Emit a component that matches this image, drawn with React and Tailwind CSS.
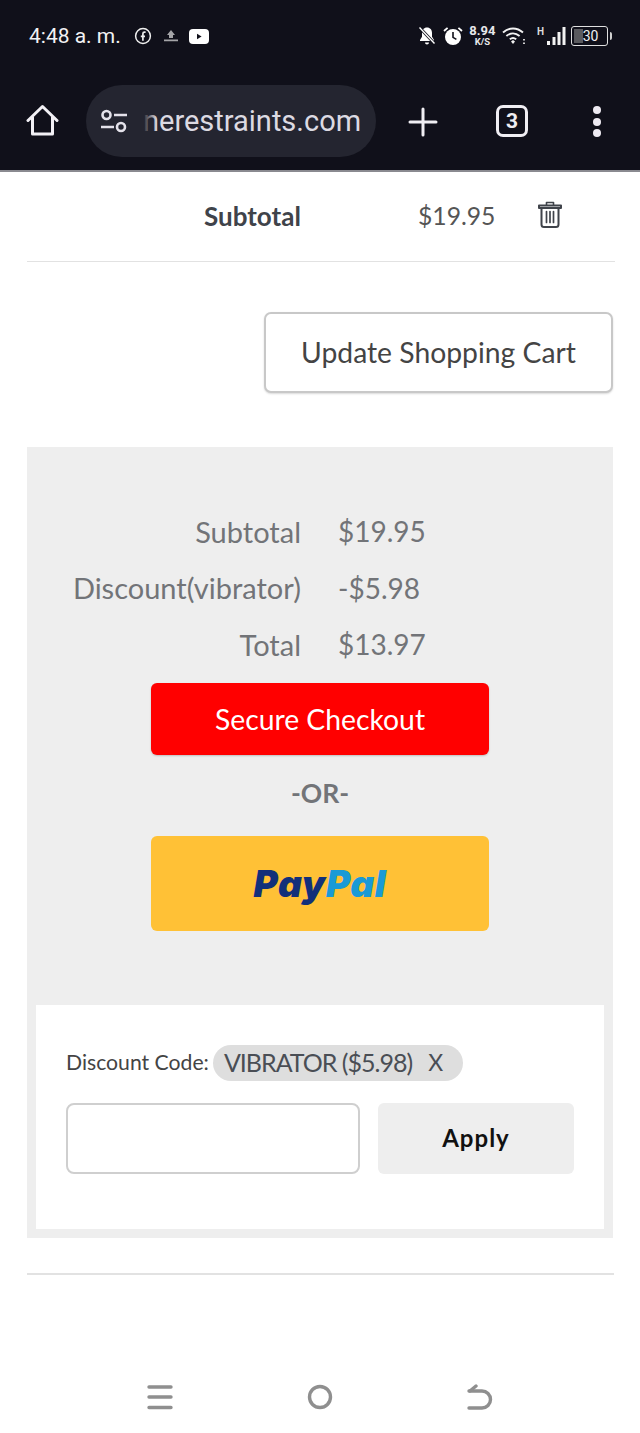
function StatusBar() {
  return (
    <div className="flex h-[71px] items-center pl-[29px] pr-[28px] pt-[1px] font-['Roboto',sans-serif] text-white">
      <span className="text-[21px] leading-none text-[#f2f2f4]">4:48 a. m.</span>
      <svg className="ml-[13px]" width="18" height="18" viewBox="0 0 18 18" fill="none" stroke="#eee" strokeWidth="1.5">
        <circle cx="9" cy="9" r="7.4" />
        <path d="M11.6 5.2h-1.2c-1 0-1.5.6-1.5 1.6v7M6.8 9.4h4.2" strokeWidth="1.7" />
      </svg>
      <svg className="ml-[11px]" width="16" height="14" viewBox="0 0 16 14" fill="#a5a5a8">
        <path d="M8 1l4 5H10v3H6V6H4zM1 10.600h14v1.600H1z" />
      </svg>
      <svg className="ml-[10px]" width="20" height="15" viewBox="0 0 20 15">
        <rect width="20" height="15" rx="4" fill="#fff" />
        <path d="M8 4.800l4.600 2.700L8 10.200z" fill="#10101a" />
      </svg>
      <svg className="ml-auto" width="18" height="20" viewBox="0 0 18 20" fill="#fff">
        <path d="M9 1.500c-3.200 0-5 2.400-5 5.200v4L2 14v1h14v-1l-2-3.300v-4c0-2.800-1.800-5.200-5-5.200zM7 16.400h4c0 1.200-.9 2-2 2s-2-.8-2-2z" />
        <path d="M1.500 1.500l15 16" stroke="#10101a" strokeWidth="3" />
        <path d="M1.500 1.500l15 16" stroke="#fff" strokeWidth="1.300" />
      </svg>
      <svg className="ml-[7px]" width="20" height="20" viewBox="0 0 20 20">
        <circle cx="10" cy="11" r="8" fill="#fff" />
        <path d="M10 6v5.400l3.400 2" fill="none" stroke="#10101a" strokeWidth="1.600" />
        <path d="M1 5l3.600-3.200M19 5l-3.600-3.200" stroke="#fff" strokeWidth="1.800" />
      </svg>
      <div className="ml-[7px] flex w-[25px] flex-col items-center font-bold leading-none text-[#e8e8ea]">
        <span className="text-[13px] leading-[12px]">8.94</span>
        <span className="text-[9.500px] leading-[10px]">K/S</span>
      </div>
      <svg className="ml-[7px]" width="24" height="20" viewBox="0 0 24 20" fill="none" stroke="#f2f2f2" strokeWidth="1.900">
        <path d="M1 6.500c6-5.400 14-5.400 20 0M4.400 10c4-3.400 9.200-3.400 13.200 0M7.800 13.300c2-1.600 4.400-1.600 6.400 0" />
        <path d="M9 15.500l2-1.600 2 1.600-2 2.400z" fill="#f2f2f2" stroke="none" />
        <path d="M22 13v1.600M22 16.400V18" strokeWidth="1.700" />
      </svg>
      <span className="ml-[11px] mb-[9px] text-[10px] font-bold leading-none text-[#ddd]">H</span>
      <svg className="ml-[2px]" width="20" height="20" viewBox="0 0 20 20" fill="#f2f2f2">
        <rect x="1" y="15" width="3" height="4" />
        <rect x="6.500" y="11" width="3" height="8" />
        <rect x="11.500" y="6" width="3" height="13" />
        <rect x="16.500" y="1" width="3" height="18" />
      </svg>
      <div className="relative ml-[5px] flex h-[20px] w-[37px] items-center justify-center overflow-hidden rounded-[3px] border border-[#e0e0e0] text-[14px] leading-none text-[#f0f0f0]">
        <div className="absolute inset-y-[2px] left-[2px] w-[9px] bg-[#5a5a5e]" />
        <span className="relative pl-[2px]">30</span>
      </div>
      <div className="ml-[2px] h-[8px] w-[2px] rounded-r-sm bg-[#d0d0d0]" />
    </div>
  );
}

function Toolbar() {
  return (
    <div className="flex h-[100px] items-start pl-[26px] pt-[14px]">
      <svg className="mt-[19px]" width="33" height="33" viewBox="0 0 33 33" fill="none" stroke="#f2f0f5" strokeWidth="3" strokeLinejoin="round" strokeLinecap="round">
        <path d="M2 16.500L16.500 2.500 31 16.500M6.500 13v17h20V13" />
      </svg>
      <div className="ml-[27px] flex h-[72px] w-[290px] items-center rounded-full bg-[#242530] pl-[14px]">
        <svg width="28" height="24" viewBox="0 0 28 24" fill="none" stroke="#e4e2ea" strokeWidth="2.600">
          <circle cx="6.500" cy="6" r="4" />
          <circle cx="21" cy="18" r="4" />
          <path d="M14 6h13M1 18h13" />
        </svg>
        {/* the first letter fades out, like chrome does with a long url */}
        <div className="relative ml-[15px] whitespace-nowrap font-['Roboto',sans-serif] text-[29px] leading-[36px] text-[#dcdae2]">
          nerestraints.com
          <div className="absolute inset-y-0 left-0 w-[14px] bg-gradient-to-r from-[#242530] to-transparent" />
        </div>
      </div>
      <svg className="ml-[32px] mt-[22px]" width="30" height="30" viewBox="0 0 30 30" stroke="#f0eef3" strokeWidth="3" strokeLinecap="round">
        <path d="M15 2v26M2 15h26" />
      </svg>
      <div className="ml-[58px] mt-[20px] flex h-[32px] w-[32px] items-center justify-center rounded-[7px] border-[3px] border-[#f0eef3] font-['Roboto',sans-serif] text-[21px] font-bold leading-none text-[#f0eef3]">
        3
      </div>
      <div className="ml-[65px] mt-[21px] flex flex-col gap-[3.500px]">
        <div className="h-[8px] w-[8px] rounded-full bg-[#eeeaf2]" />
        <div className="h-[8px] w-[8px] rounded-full bg-[#eeeaf2]" />
        <div className="h-[8px] w-[8px] rounded-full bg-[#eeeaf2]" />
      </div>
    </div>
  );
}

function TrashIcon() {
  return (
    <svg className="ml-[40px] mb-[5px]" width="26" height="30" viewBox="0 0 26 30" fill="none" stroke="#3f434a" strokeWidth="2" strokeLinecap="round" strokeLinejoin="round">
      <path d="M2 6.500h22v2.500H2z" />
      <path d="M9.500 6V3.500h7V6" strokeWidth="1.600" />
      <path d="M4.500 9v16.500c0 1.500 1 2.500 2.500 2.500h12c1.500 0 2.500-1 2.500-2.500V9" />
      <path d="M9.500 12.500v11M13 12.500v11M16.500 12.500v11" strokeWidth="1.700" />
    </svg>
  );
}

function TotalRow({ label, value }) {
  return (
    <div className="flex h-[56.500px] items-center leading-none text-[#727478]">
      <div className="w-[274px] text-right text-[29px]">{label}</div>
      <div className="ml-[37px] text-[28px]">{value}</div>
    </div>
  );
}

function PayPalMark() {
  return (
    <span className="font-['Inter',sans-serif] text-[37px] font-black italic leading-none tracking-[0.6px]">
      <span className="text-[#12307a]">Pay</span>
      <span className="text-[#1a9ad6]">Pal</span>
    </span>
  );
}

function NavBar() {
  return (
    <div className="mt-[109px] flex justify-center gap-[134px]">
      <svg width="26" height="26" viewBox="0 0 26 26" stroke="#8f8f8f" strokeWidth="3.400" strokeLinecap="round">
        <path d="M2 3h22M2 13h22M2 23.500h22" />
      </svg>
      <svg width="26" height="26" viewBox="0 0 26 26" fill="none" stroke="#8f8f8f" strokeWidth="3.400">
        <circle cx="13" cy="13" r="10.500" />
      </svg>
      <svg width="26" height="26" viewBox="0 0 26 26" fill="none" stroke="#8f8f8f" strokeWidth="3.400" strokeLinecap="round">
        <path d="M2 7h13a8 8 0 0 1 0 17H2" />
        <path d="M9 2L3 7" strokeLinejoin="round" />
      </svg>
    </div>
  );
}

export default function App() {
  return (
    <div className="h-[1433px] w-[640px] overflow-hidden bg-white font-['Lato',sans-serif] text-[#3f434a]">
      <header className="h-[172px] border-b-2 border-[#8a8a90] bg-[#10101a]">
        <StatusBar />
        <Toolbar />
      </header>

      <div className="mx-[27px] flex h-[90px] w-[588px] items-center border-b border-[#e2e2e2] pb-[1px]">
        <span className="ml-[177px] w-[97px] whitespace-nowrap text-[26px] font-bold leading-none">Subtotal</span>
        <span className="ml-[117px] w-[79px] text-[24.700px] leading-none text-[#555]">$19.95</span>
        <TrashIcon />
      </div>

      <div className="mt-[50px] flex justify-end pr-[27px]">
        <button className="h-[81px] w-[349px] rounded-[7px] border-2 border-[#c8c8c8] bg-white text-[28.300px] leading-none text-[#444] shadow-[0_1px_2px_rgba(0,0,0,0.15)]">
          Update Shopping Cart
        </button>
      </div>

      <section className="mx-[27px] mt-[54px] h-[791px] w-[586px] bg-[#eeeeee] p-[9px] pt-[56px]">
        <div className="-ml-[9px]">
          <TotalRow label="Subtotal" value="$19.95" />
          <TotalRow label="Discount(vibrator)" value="-$5.98" />
          <TotalRow label="Total" value="$13.97" />
        </div>

        <button className="ml-[115px] mt-[10px] block h-[72px] w-[338px] rounded-[6px] bg-[#ff0000] pt-[2px] text-[28.300px] leading-none text-white shadow-[0_1px_2px_rgba(0,0,0,0.2)]">
          Secure Checkout
        </button>

        <div className="mt-[22px] text-center text-[26.500px] font-bold leading-[32px] text-[#727478]">-OR-</div>

        <button className="ml-[115px] mt-[27px] flex h-[95px] w-[338px] items-center justify-center rounded-[6px] bg-[#ffc136]">
          <PayPalMark />
        </button>

        <div className="mt-[74px] h-[224px] bg-white px-[30px] pt-[40px]">
          <div className="flex items-center">
            <span className="text-[21.200px] leading-none text-[#444]">Discount Code:</span>
            <span className="ml-[4px] flex h-[36px] w-[250px] items-center rounded-full bg-[#dedede] pl-[11px] text-[25px] leading-none tracking-[-1px] text-[#4a4e55]">
              VIBRATOR ($5.98)
              <span className="ml-[16px] text-[23px] tracking-normal">X</span>
            </span>
          </div>
          <div className="mt-[22px] flex">
            <input className="h-[71px] w-[294px] rounded-[8px] border-2 border-[#cfcfcf] bg-white" />
            <button className="ml-[18px] h-[71px] w-[196px] rounded-[6px] bg-[#eeeeee] text-[24px] font-bold leading-none tracking-[1px] text-[#111]">
              Apply
            </button>
          </div>
        </div>
      </section>

      <div className="mx-[27px] mt-[35px] h-[2px] w-[587px] bg-[#e2e2e2]" />

      <NavBar />
    </div>
  );
}
